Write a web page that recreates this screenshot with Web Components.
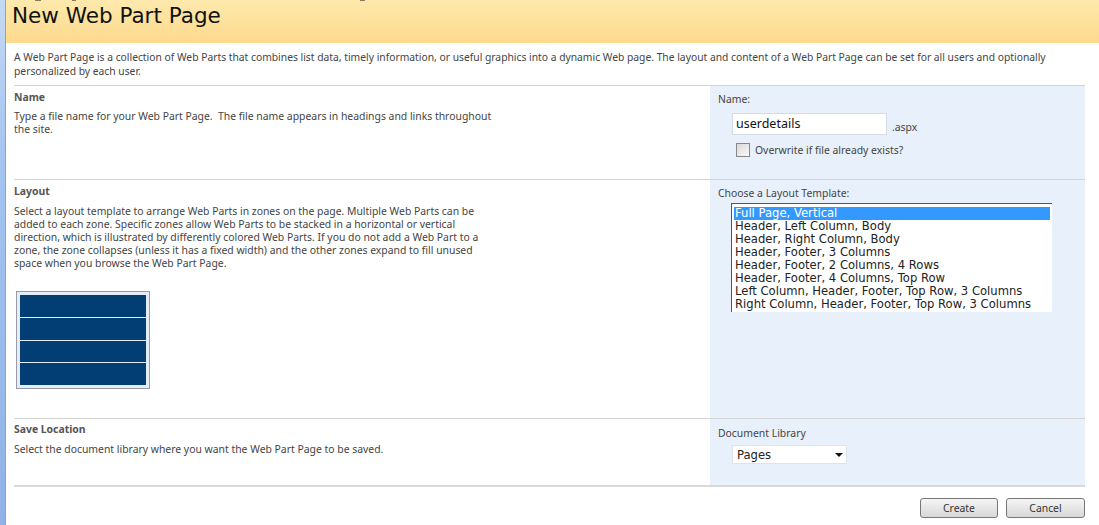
<!DOCTYPE html>
<html><head><meta charset="utf-8"><style>
html,body{margin:0;padding:0;background:#fff;overflow:hidden}
body{width:1099px;height:525px;font:10.4px "Noto Sans",sans-serif}
</style></head><body>
<wp-page>
  <wp-header>New Web Part Page</wp-header>
  <wp-intro>A Web Part Page is a collection of Web Parts that combines list data, timely information, or useful graphics into a dynamic Web page. The layout and content of a Web Part Page can be set for all users and optionally personalized by each user.</wp-intro>
  <wp-section style="--h:94px;--pt:5px;--gap:6px" heading="Name">
    <span slot="desc">Type a file name for your Web Part Page.&nbsp; The file name appears in headings and links throughout the site.</span>
    <wp-label>Name:</wp-label>
    <wp-name-field value="userdetails"></wp-name-field>
  </wp-section>
  <wp-section style="--h:239px;--pt:5px;--gap:7px" heading="Layout">
    <span slot="desc">Select a layout template to arrange Web Parts in zones on the page. Multiple Web Parts can be added to each zone. Specific zones allow Web Parts to be stacked in a horizontal or vertical direction, which is illustrated by differently colored Web Parts. If you do not add a Web Part to a zone, the zone collapses (unless it has a fixed width) and the other zones expand to fill unused space when you browse the Web Part Page.</span>
    <wp-preview slot="desc"></wp-preview>
    <wp-label>Choose a Layout Template:</wp-label>
    <wp-listbox></wp-listbox>
  </wp-section>
  <wp-section style="--h:67px;--pt:4px;--gap:7px" heading="Save Location" last>
    <span slot="desc">Select the document library where you want the Web Part Page to be saved.</span>
    <wp-label style="padding-top:1px">Document Library</wp-label>
    <wp-dropdown>Pages</wp-dropdown>
  </wp-section>
  <wp-actions><wp-button>Create</wp-button><wp-button style="width:79px">Cancel</wp-button></wp-actions>
</wp-page>
<script>
const F='"Noto Sans",sans-serif';
const V='"DejaVu Sans",sans-serif';
function def(name,html,init){
  customElements.define(name,class extends HTMLElement{
    connectedCallback(){ if(this.shadowRoot)return;
      const r=this.attachShadow({mode:'open'}); r.innerHTML=html; if(init)init.call(this,r);}
  });
}
def('wp-page',`<style>:host{display:flex;width:1099px;height:525px;overflow:hidden}
.strip{width:5px;flex:none;background:linear-gradient(#c4d9f4,#a5c4f0 30%,#8fb3e8 100%);border-right:1px solid #7fa6dc}
.main{flex:1;min-width:0;display:flex;flex-direction:column}</style>
<div class="strip"></div><div class="main"><slot></slot></div>`);
def('wp-header',`<style>:host{display:flex;position:relative;align-items:flex-start;height:43px;box-sizing:border-box;padding:0 0 0 6px;
background:linear-gradient(#fde9ad,#fed98c);font:21.5px/31px ${V};color:#111}
b{position:absolute;top:0;height:1px;background:#8a7a5a}</style><b style="left:29px;width:6px"></b><b style="left:66px;width:4px"></b><b style="left:354px;width:5px"></b><slot></slot>`);
def('wp-intro',`<style>:host{display:block;height:42px;box-sizing:border-box;padding:7px 40px 0 8px;font:10.3px/14px ${F};color:#444}</style><slot></slot>`);
def('wp-section',`<style>:host{display:flex;margin-left:8px;width:1071px;height:var(--h);box-sizing:border-box;border-top:1px solid #d4d4d4}
:host([last]){border-bottom:2px solid #d8d8d8;height:calc(var(--h) + 2px)}
.l{width:696px;flex:none;box-sizing:border-box;padding:var(--pt) 210px 0 0;color:#444;font:10.4px/13px ${F}}
.h{font-weight:bold;color:#555;margin-bottom:var(--gap)}
.r{flex:1;background:#e8f0fb;box-sizing:border-box;padding:7px 8px 0}</style>
<div class="l"><div class="h" id="h"></div><slot name="desc"></slot></div><div class="r"><slot></slot></div>`,
function(r){r.getElementById('h').textContent=this.getAttribute('heading')});
def('wp-label',`<style>:host{display:block;font:10.4px/13px ${F};color:#444}</style><slot></slot>`);
def('wp-name-field',`<style>:host{display:block;padding:7px 0 0 14px;color:#444;font:10.4px/13px ${F}}
.row{display:flex;align-items:flex-end;gap:5px}
.row span{position:relative;top:-1px}
.in{width:155px;height:22px;box-sizing:border-box;background:#fff;border:1px solid #d5dbe3;font:12.5px/20px ${F};color:#111;padding:0 3px}
.ow{display:flex;align-items:center;gap:5px;margin:8px 0 0 4px}
.cb{width:12px;height:12px;border:1px solid #888;background:linear-gradient(135deg,#d8d8d8,#fafafa)}</style>
<div class="row"><div class="in" id="v"></div><span>.aspx</span></div><div class="ow"><span class="cb"></span><span>Overwrite if file already exists?</span></div>`,
function(r){r.getElementById('v').textContent=this.getAttribute('value')});
def('wp-preview',`<style>:host{display:grid;grid-template-rows:repeat(4,1fr);gap:1px;box-sizing:border-box;width:134px;height:98px;margin:21px 0 0 2px;padding:3px;background:#e4eefb;border:1px solid #9a9aa6}
i{background:#023d74;display:block}</style><i></i><i></i><i></i><i></i>`);
def('wp-listbox',`<style>:host{display:block;margin:3px 0 0 13px;width:321px;height:109px;box-sizing:border-box;background:#fff;border:solid #555;border-width:1px 0 0 1px;padding:3px 0 0 2px;font:11.6px/13px ${V};color:#222}
div{padding-left:1px;height:13px;white-space:nowrap}
.s{background:#3399ff;color:#fff;margin-right:2px}</style>`+
['Full Page, Vertical','Header, Left Column, Body','Header, Right Column, Body','Header, Footer, 3 Columns','Header, Footer, 2 Columns, 4 Rows','Header, Footer, 4 Columns, Top Row','Left Column, Header, Footer, Top Row, 3 Columns','Right Column, Header, Footer, Top Row, 3 Columns'].map((t,i)=>`<div class="${i?'':'s'}">${t}</div>`).join(''));
def('wp-dropdown',`<style>:host{display:flex;align-items:center;justify-content:space-between;margin:5px 0 0 14px;width:115px;height:19px;box-sizing:border-box;background:#fff;border:1px solid #dde3ea;padding:0 3px 0 4px;font:11.6px ${V};color:#222}
.a{width:0;height:0;border:4px solid transparent;border-top:4px solid #111;border-bottom:0}</style><slot></slot><span class="a"></span>`);
def('wp-actions',`<style>:host{display:flex;justify-content:flex-end;gap:8px;width:1079px;padding-top:11px}</style><slot></slot>`);
def('wp-button',`<style>:host{display:flex;align-items:center;justify-content:center;width:78px;height:20px;box-sizing:border-box;border:1px solid #777;border-radius:3px;background:linear-gradient(#f5f5f5,#d8d8d8);font:10.4px ${F};color:#333}</style><slot></slot>`);
</script>
</body></html>
